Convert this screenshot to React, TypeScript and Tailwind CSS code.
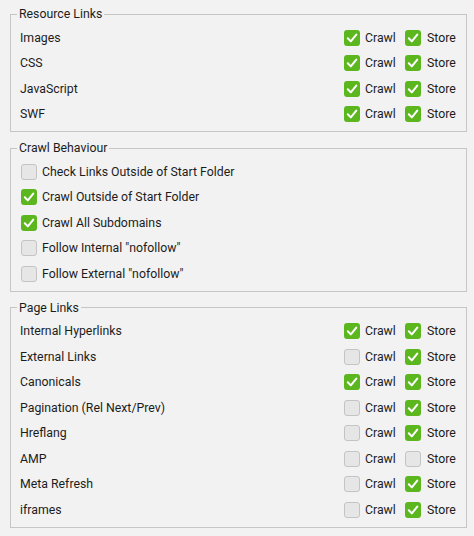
import type { ReactNode } from "react";

type Opt = { label: string; crawl: boolean; store: boolean };

const resourceLinks: Opt[] = [
  { label: "Images", crawl: true, store: true },
  { label: "CSS", crawl: true, store: true },
  { label: "JavaScript", crawl: true, store: true },
  { label: "SWF", crawl: true, store: true },
];

const behaviour = [
  { label: "Check Links Outside of Start Folder", checked: false },
  { label: "Crawl Outside of Start Folder", checked: true },
  { label: "Crawl All Subdomains", checked: true },
  { label: 'Follow Internal "nofollow"', checked: false },
  { label: 'Follow External "nofollow"', checked: false },
];

const pageLinks: Opt[] = [
  { label: "Internal Hyperlinks", crawl: true, store: true },
  { label: "External Links", crawl: false, store: true },
  { label: "Canonicals", crawl: true, store: true },
  { label: "Pagination (Rel Next/Prev)", crawl: false, store: true },
  { label: "Hreflang", crawl: false, store: true },
  { label: "AMP", crawl: false, store: false },
  { label: "Meta Refresh", crawl: false, store: true },
  { label: "iframes", crawl: false, store: true },
];

function Box({ checked }: { checked: boolean }) {
  if (!checked) {
    return (
      <span className="block w-[16px] h-[16px] rounded-[3px] bg-[#e6e6e6] border border-[#c4c4c4] shrink-0" />
    );
  }
  return (
    <span className="flex items-center justify-center w-[16px] h-[16px] rounded-[3px] bg-[#5cb71f] shrink-0">
      <svg width="16" height="16" viewBox="0 0 16 16" fill="none">
        <path
          d="M3.8 8.3 L6.8 11.4 L12.3 4.6"
          stroke="white"
          strokeWidth="2"
          strokeLinecap="round"
          strokeLinejoin="round"
        />
      </svg>
    </span>
  );
}

function Group({ title, children }: { title: string; children: ReactNode }) {
  return (
    <fieldset className="border border-[#c6c6c6] pl-[9px] pr-[9px] pt-[3px] pb-[4px]">
      <legend className="-ml-[3px] px-[2px] leading-[16px]">{title}</legend>
      {children}
    </fieldset>
  );
}

function CrawlStoreRow({ item }: { item: Opt }) {
  return (
    <div className="flex items-center h-[25.5px]">
      <span className="flex-1">{item.label}</span>
      <div className="flex items-center gap-[5px] w-[61px]">
        <Box checked={item.crawl} />
        <span>Crawl</span>
      </div>
      <div className="flex items-center gap-[6px] w-[52px]">
        <Box checked={item.store} />
        <span>Store</span>
      </div>
    </div>
  );
}

export default function App() {
  return (
    <div
      className="w-[474px] h-[536px] bg-[#f2f2f2] text-[#1c1c1c] text-[12.3px] pl-[10px] pr-[7px] pt-[6px] flex flex-col gap-[8px]"
      style={{ fontFamily: "Roboto, 'Liberation Sans', sans-serif" }}
    >
      <Group title="Resource Links">
        {resourceLinks.map((r) => (
          <CrawlStoreRow key={r.label} item={r} />
        ))}
      </Group>

      <Group title="Crawl Behaviour">
        {behaviour.map((b) => (
          <div key={b.label} className="flex items-center gap-[5px] h-[25.5px] pl-[1px]">
            <Box checked={b.checked} />
            <span>{b.label}</span>
          </div>
        ))}
      </Group>

      <Group title="Page Links">
        {pageLinks.map((r) => (
          <CrawlStoreRow key={r.label} item={r} />
        ))}
      </Group>
    </div>
  );
}
